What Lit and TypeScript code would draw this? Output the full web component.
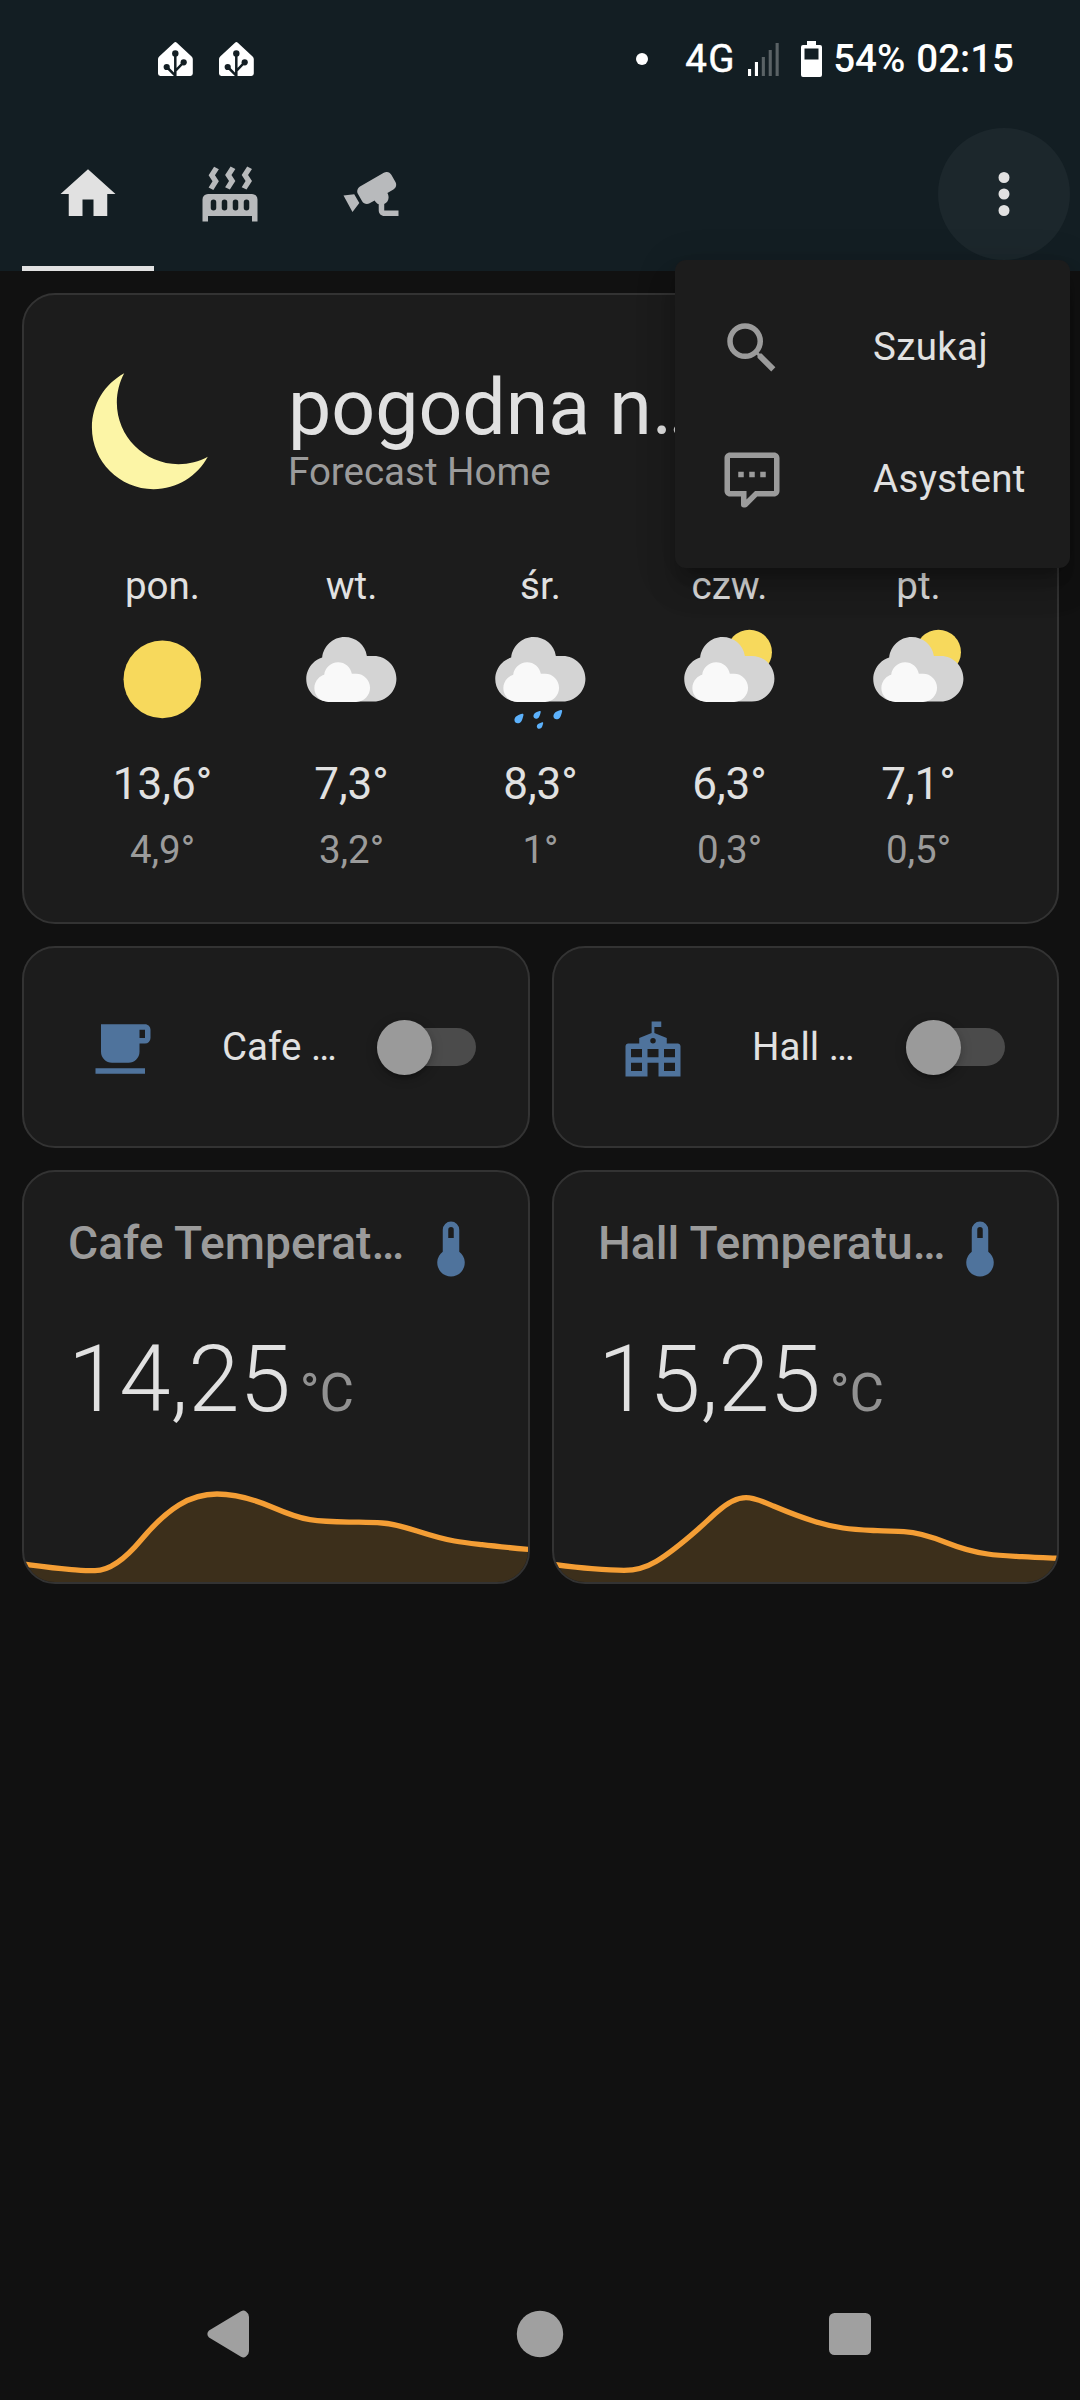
import { LitElement, html, css, svg } from "lit";
import { customElement, property } from "lit/decorators.js";

const ICONS: Record<string, string> = {
  home: "M10,20V14H14V20H19V12H22L12,3L2,12H5V20H10Z",
  radiator:
    "M7.95,3L6.53,5.19L7.95,7.4H7.94L5.95,10.5L4.22,9.6L5.64,7.39L4.22,5.19L6.22,2.09L7.95,3M13.95,2.89L12.53,5.1L13.95,7.3L13.94,7.31L11.95,10.4L10.22,9.5L11.64,7.3L10.22,5.1L12.22,2L13.95,2.89M20,2.89L18.56,5.1L20,7.3V7.31L18,10.4L16.25,9.5L17.67,7.3L16.25,5.1L18.25,2L20,2.89M2,22V14A2,2 0 0,1 4,12H20A2,2 0 0,1 22,14V22H20V20H4V22H2M6,14A1,1 0 0,0 5,15V17A1,1 0 0,0 6,18A1,1 0 0,0 7,17V15A1,1 0 0,0 6,14M10,14A1,1 0 0,0 9,15V17A1,1 0 0,0 10,18A1,1 0 0,0 11,17V15A1,1 0 0,0 10,14M14,14A1,1 0 0,0 13,15V17A1,1 0 0,0 14,18A1,1 0 0,0 15,17V15A1,1 0 0,0 14,14M18,14A1,1 0 0,0 17,15V17A1,1 0 0,0 18,18A1,1 0 0,0 19,17V15A1,1 0 0,0 18,14Z",
  cctv: "M17.8,4.04C17.42,4.01 17.02,4.1 16.65,4.3L8,9.3C7.04,9.86 6.72,11.1 7.27,12.04L8.77,14.63C9.32,15.6 10.54,15.92 11.5,15.37L13.3,14.33C13.7,14.9 14.2,15.5 14.81,15.7V18C14.81,19.1 15.7,20 16.81,20H22V18H16.81V15.6C17.9,15.1 18.4,14.3 18.4,13.2C18.4,12.6 18.2,12.1 17.97,11.6L20.15,10.37C21.1,9.8 21.45,8.6 20.89,7.63L19.39,5.04C19.05,4.44 18.44,4.1 17.8,4.04M5.9,12.1L2,12.5L5.27,18.5L7.75,15.3Z",
  dots: "M12,16A2,2 0 0,1 14,18A2,2 0 0,1 12,20A2,2 0 0,1 10,18A2,2 0 0,1 12,16M12,10A2,2 0 0,1 14,12A2,2 0 0,1 12,14A2,2 0 0,1 10,12A2,2 0 0,1 12,10M12,4A2,2 0 0,1 14,6A2,2 0 0,1 12,8A2,2 0 0,1 10,6A2,2 0 0,1 12,4Z",
  magnify:
    "M9.5,3A6.5,6.5 0 0,1 16,9.5C16,11.11 15.41,12.59 14.44,13.73L14.71,14H15.5L20.5,19L19,20.5L14,15.5V14.71L13.73,14.44C12.59,15.41 11.11,16 9.5,16A6.5,6.5 0 0,1 3,9.5A6.5,6.5 0 0,1 9.5,3M9.5,5C7,5 5,7 5,9.5C5,12 7,14 9.5,14C12,14 14,12 14,9.5C14,7 12,5 9.5,5Z",
  message:
    "M20 2H4C2.9 2 2 2.9 2 4V16C2 17.1 2.9 18 4 18H8V21C8 21.6 8.4 22 9 22H9.5C9.7 22 10 21.9 10.2 21.7L13.9 18H20C21.1 18 22 17.1 22 16V4C22 2.9 21.1 2 20 2M20 16H13.1L10 19.1V16H4V4H20V16M17 11H15V9H17V11M13 11H11V9H13V11M9 11H7V9H9V11Z",
  coffee:
    "M2,21H20V19H2M20,8H18V5H20M20,3H4V13A4,4 0 0,0 8,17H14A4,4 0 0,0 18,13V10H20A2,2 0 0,0 22,8V5C22,3.89 21.1,3 20,3Z",
  townHall:
    "M21,10H17V8L12.5,6.2V4H15V2H11.5V6.2L7,8V10H3C2.45,10 2,10.45 2,11V22H10V17H14V22H22V11C22,10.45 21.55,10 21,10M8,20H4V17H8V20M8,15H4V12H8V15M12,8A1,1 0 0,1 13,9A1,1 0 0,1 12,10A1,1 0 0,1 11,9A1,1 0 0,1 12,8M14,15H10V12H14V15M20,20H16V17H20V20M20,15H16V12H20V15Z",
  thermometer:
    "M15 13V5A3 3 0 0 0 9 5V13A5 5 0 1 0 15 13M12 4A1 1 0 0 1 13 5V8H11V5A1 1 0 0 1 12 4Z",
};

const icon = (name: string) => html`
  <svg class="icon" width="66" height="66" viewBox="0 0 24 24"><path fill="currentColor" d=${ICONS[name]}></path></svg>
`;

type Sky = "sunny" | "cloudy" | "rainy" | "partly";

const DROP =
  "m5.2852 14.734c-0.22401 0.24765-0.57115 0.2988-0.77505 0.11395-0.20391-0.1845-0.18732-0.53481 0.036689-0.78281 0.14817-0.16298 0.59126-0.32914 0.87559-0.42369 0.12453-0.04092 0.22684 0.05186 0.19791 0.17956-0.065617 0.2921-0.18732 0.74965-0.33514 0.91299";

// x, y, scale of each rain drop in the 17-unit weather box
const DROPS = [
  [5.1, 14.4, 1.12],
  [7.9, 13.85, 0.9],
  [8.35, 15.5, 0.78],
  [11.1, 13.8, 1.08],
];

const weatherIcon = (sky: Sky) => html`
  <svg class="sky" width="110" height="110" viewBox="0 0 17 17">
    ${sky === "sunny" ? svg`<circle cx="8.4" cy="8.4" r="6" fill="#f7d95c"></circle>` : ""}
    ${sky === "partly" ? svg`<circle cx="11.497" cy="4.211" r="3.484" fill="#f7d95c"></circle>` : ""}
    ${sky !== "sunny"
      ? svg`
        <path fill="#d4d4d4" d="m3.8863 5.035c-0.54892 0.16898-1.04 0.46637-1.4372 0.8636-0.63077 0.63041-1.0206 1.4933-1.0206 2.455 0 1.9251 1.5589 3.4682 3.4837 3.4682h6.9688c1.9251 0 3.484-1.5981 3.484-3.5232 0-1.9251-1.5589-3.5232-3.484-3.5232h-1.0834c-0.25294-1.6916-1.6986-2.9083-3.4463-2.9083-1.7995 0-3.2805 1.4153-3.465 3.1679"></path>
        <path fill="#f9f9f9" d="m4.1996 7.6995c-0.33902 0.10407-0.64276 0.28787-0.88794 0.5334-0.39017 0.38982-0.63147 0.92322-0.63147 1.5176 0 1.1896 0.96414 2.1431 2.1537 2.1431h4.3071c1.1896 0 2.153-0.98742 2.153-2.1777 0-1.1896-0.96344-2.1777-2.153-2.1777h-0.66992c-0.15593-1.0449-1.0499-1.7974-2.1297-1.7974-1.112 0-2.0274 0.87524-2.1417 1.9586"></path>`
      : ""}
    ${sky === "rainy"
      ? DROPS.map(
          ([x, y, s]) =>
            svg`<path fill="#5cb1fb" transform="translate(${x} ${y}) scale(${s}) translate(-5 -14.25)" d=${DROP}></path>`
        )
      : ""}
  </svg>
`;

const baseStyles = css`
  * {
    box-sizing: border-box;
  }
  svg {
    display: block;
    flex: none;
  }
  .card {
    background: #1c1c1c;
    border: 2px solid #333333;
    border-radius: 33px;
    overflow: hidden;
  }
`;

@customElement("status-bar")
class StatusBar extends LitElement {
  static styles = [
    baseStyles,
    css`
      :host {
        display: flex;
        align-items: center;
        justify-content: space-between;
        height: 117px;
        padding: 0 66px 0 158px;
        color: #fff;
        font-size: 38.5px;
        font-weight: 500;
        line-height: 46px;
      }
      .group {
        display: flex;
        align-items: center;
      }
      .notes {
        gap: 26px;
      }
      .dot {
        width: 12px;
        height: 12px;
        border-radius: 50%;
        background: #fff;
        margin-right: 37px;
      }
      .net {
        font-weight: 400;
        letter-spacing: 1.6px;
        -webkit-text-stroke: 0.5px #fff;
        margin-right: 12px;
      }
      .signal {
        margin-right: 22px;
      }
      .battery {
        margin-right: 11px;
      }
      .percent {
        margin-right: 11px;
      }
    `,
  ];

  private note() {
    return html`<svg width="35" height="34" viewBox="0 0 35 34">
      <path fill="#fff" d="M16 .7Q17.4 -.6 18.8 .7L33.6 14.4Q34.8 15.6 34.8 17V31.6Q34.8 34 32.4 34H2.4Q0 34 0 31.6V17Q0 15.6 1.2 14.4Z"></path>
      <g fill="none" stroke="#131e23" stroke-width="2.5">
        <path d="M17.3 11V34M25.5 20.4L17.3 29M8.7 25L17.3 33.6"></path>
      </g>
      <g fill="#131e23">
        <circle cx="17.3" cy="11.4" r="3.2"></circle>
        <circle cx="25.7" cy="20.3" r="3.1"></circle>
        <circle cx="8.7" cy="25" r="3.1"></circle>
      </g>
    </svg>`;
  }

  render() {
    const bars = [7, 14, 19, 26, 33];
    return html`
      <div class="group notes">${this.note()}${this.note()}</div>
      <div class="group">
        <div class="dot"></div>
        <div class="net">4G</div>
        <svg class="signal" width="31" height="34" viewBox="0 0 31 34">
          ${bars.map(
            (h, i) =>
              svg`<rect x=${i * 6.9} y=${34 - h} width="3.1" height=${h} fill=${i < 2 ? "#fff" : "#5a6265"}></rect>`
          )}
        </svg>
        <svg class="battery" width="21" height="36" viewBox="0 0 21 36">
          <path
            fill="#fff"
            fill-rule="evenodd"
            d="M6 0H15V4H19Q21 4 21 6V34Q21 36 19 36H2Q0 36 0 34V6Q0 4 2 4H6ZM3.5 7.5V18.5H17.5V7.5Z"
          ></path>
        </svg>
        <div class="percent">54%</div>
        <div>02:15</div>
      </div>
    `;
  }
}

@customElement("view-tabs")
class ViewTabs extends LitElement {
  static styles = [
    baseStyles,
    css`
      :host {
        display: flex;
        justify-content: space-between;
        align-items: center;
        height: 154px;
        padding: 0 10px 0 22px;
      }
      .tabs {
        display: flex;
        gap: 9.6px;
        height: 154px;
      }
      .tab {
        width: 132px;
        display: flex;
        align-items: center;
        justify-content: center;
        color: #b8babc;
        border-bottom: 5px solid transparent;
        padding-top: 5px;
      }
      .active {
        color: #e1e1e1;
        border-bottom-color: #e1e1e1;
      }
      .more {
        width: 132px;
        height: 132px;
        border-radius: 50%;
        background: #1c272c;
        color: #e1e1e1;
        display: flex;
        align-items: center;
        justify-content: center;
      }
    `,
  ];
  render() {
    return html`
      <div class="tabs">
        <div class="tab active">${icon("home")}</div>
        <div class="tab">${icon("radiator")}</div>
        <div class="tab">${icon("cctv")}</div>
      </div>
      <div class="more">${icon("dots")}</div>
    `;
  }
}

@customElement("overflow-menu")
class OverflowMenu extends LitElement {
  static styles = [
    baseStyles,
    css`
      :host {
        display: flex;
        flex-direction: column;
        width: 395px;
        height: 308px;
        padding: 22px 0;
        border-radius: 11px;
        background: #1c1c1c;
        box-shadow: 0 14px 14px -8px rgba(0, 0, 0, 0.2), 0 22px 28px 3px rgba(0, 0, 0, 0.14),
          0 8px 38px 5px rgba(0, 0, 0, 0.12);
      }
      .item {
        height: 132px;
        display: flex;
        align-items: center;
        gap: 88px;
        padding-left: 44px;
        font-size: 38.5px;
        line-height: 44px;
        letter-spacing: 0.35px;
        color: #e1e1e1;
        white-space: nowrap;
      }
      .icon {
        color: #9b9b9b;
      }
      .label {
        padding-bottom: 2px;
      }
    `,
  ];
  render() {
    return html`
      <div class="item">${icon("magnify")}<span class="label">Szukaj</span></div>
      <div class="item">${icon("message")}<span class="label">Asystent</span></div>
    `;
  }
}

interface Day {
  name: string;
  sky: Sky;
  high: string;
  low: string;
}

const DAYS: Day[] = [
  { name: "pon.", sky: "sunny", high: "13,6°", low: "4,9°" },
  { name: "wt.", sky: "cloudy", high: "7,3°", low: "3,2°" },
  { name: "śr.", sky: "rainy", high: "8,3°", low: "1°" },
  { name: "czw.", sky: "partly", high: "6,3°", low: "0,3°" },
  { name: "pt.", sky: "partly", high: "7,1°", low: "0,5°" },
];

@customElement("weather-card")
class WeatherCard extends LitElement {
  static styles = [
    baseStyles,
    css`
      :host {
        display: block;
      }
      .card {
        height: 631px;
        padding: 44px;
      }
      .now {
        display: flex;
        align-items: center;
        gap: 44px;
        height: 176px;
      }
      .text {
        padding-bottom: 2px;
      }
      .state {
        font-size: 77px;
        line-height: 92px;
        color: #e1e1e1;
        white-space: nowrap;
      }
      .place {
        font-size: 38.5px;
        line-height: 36px;
        color: #9b9b9b;
      }
      .days {
        display: grid;
        grid-template-columns: repeat(5, 1fr);
        margin-top: 51px;
      }
      .day {
        display: flex;
        flex-direction: column;
        align-items: center;
        color: #e1e1e1;
        font-size: 38.5px;
        line-height: 40px;
      }
      .sky {
        margin: 19px 0 24px;
      }
      .high {
        font-size: 44px;
        line-height: 50px;
        margin-bottom: 21px;
      }
      .low {
        color: #9b9b9b;
      }
    `,
  ];
  render() {
    return html`
      <div class="card">
        <div class="now">
          <svg width="176" height="176" viewBox="0 0 17 17">
            <path
              fill="#fcf5a6"
              d="m 13.502891,11.382935 c -1.011285,1.859223 -2.976664,3.121381 -5.2405751,3.121381 -3.289929,0 -5.953329,-2.663833 -5.953329,-5.9537625 0,-2.263911 1.261724,-4.228856 3.120948,-5.240575 -0.452782,0.842738 -0.712753,1.806363 -0.712753,2.832381 0,3.289928 2.663833,5.9533275 5.9533291,5.9533275 1.026017,0 1.989641,-0.259969 2.83238,-0.712752"
            ></path>
          </svg>
          <div class="text">
            <div class="state">pogodna n…</div>
            <div class="place">Forecast Home</div>
          </div>
        </div>
        <div class="days">
          ${DAYS.map(
            (d) => html`<div class="day">
              <div>${d.name}</div>
              ${weatherIcon(d.sky)}
              <div class="high">${d.high}</div>
              <div class="low">${d.low}</div>
            </div>`
          )}
        </div>
      </div>
    `;
  }
}

@customElement("switch-card")
class SwitchCard extends LitElement {
  @property() icon = "";
  @property() label = "";
  static styles = [
    baseStyles,
    css`
      :host {
        display: block;
      }
      .card {
        height: 202px;
        display: flex;
        align-items: center;
        padding: 0 52px 0 66px;
      }
      .icon {
        color: #4f739c;
        margin: 3px 66px 0 0;
      }
      .label {
        flex: 1;
        font-size: 38.5px;
        line-height: 44px;
        color: #e1e1e1;
        white-space: nowrap;
      }
      .track {
        width: 99px;
        height: 38px;
        border-radius: 19px;
        background: #4b4b4b;
        display: flex;
        align-items: center;
      }
      .thumb {
        flex: none;
        width: 55px;
        height: 55px;
        border-radius: 50%;
        background: #9a9a9a;
        box-shadow: 0 8px 3px -5px rgba(0, 0, 0, 0.2), 0 3px 6px 0 rgba(0, 0, 0, 0.14),
          0 3px 14px 0 rgba(0, 0, 0, 0.12);
      }
    `,
  ];
  render() {
    return html`
      <div class="card">
        ${icon(this.icon)}
        <div class="label">${this.label}</div>
        <div class="track"><div class="thumb"></div></div>
      </div>
    `;
  }
}

// x, y and slope of the curve at each knot
type Knot = [number, number, number];

// Hermite curve through the knots, written as cubic segments
function smooth(knots: Knot[]): string {
  let d = `M${knots[0][0]},${knots[0][1]}`;
  for (let i = 1; i < knots.length; i++) {
    const [x0, y0, m0] = knots[i - 1];
    const [x1, y1, m1] = knots[i];
    const t = (x1 - x0) / 3;
    d += `C${x0 + t},${y0 + m0 * t} ${x1 - t},${y1 - m1 * t} ${x1},${y1}`;
  }
  return d;
}

const CAFE: Knot[] = [
  [-4, 81.6, 0.13],
  [45, 87.3, 0.07],
  [71, 88.7, -0.02],
  [117, 58, -1.2],
  [155, 23, -0.62],
  [193, 12, 0],
  [249, 25.5, 0.43],
  [286, 37.7, 0.16],
  [335, 40.2, 0.02],
  [358, 41, 0.06],
  [393, 49, 0.32],
  [430.5, 59, 0.17],
  [458, 62.7, 0.12],
  [510, 67.9, 0.09],
];

const HALL: Knot[] = [
  [-4, 82, 0.13],
  [37.7, 86.7, 0.08],
  [70, 88.4, 0],
  [102, 79.5, -0.6],
  [144, 47.2, -0.88],
  [163, 30, -0.88],
  [192, 15.7, 0],
  [220, 24.3, 0.42],
  [261.5, 39.7, 0.3],
  [289, 46, 0.15],
  [323.5, 48.7, 0.05],
  [350, 49.6, 0.05],
  [392, 60.5, 0.4],
  [433.7, 72, 0.14],
  [468, 74.7, 0.06],
  [510, 76.5, 0.04],
];

@customElement("graph-card")
class GraphCard extends LitElement {
  @property() label = "";
  @property() value = "";
  @property({ attribute: false }) points: Knot[] = [];
  static styles = [
    baseStyles,
    css`
      :host {
        display: block;
      }
      .card {
        height: 414px;
        display: flex;
        flex-direction: column;
        padding-top: 44px;
      }
      .head {
        display: flex;
        justify-content: space-between;
        padding: 0 44px;
        height: 66px;
      }
      .title {
        width: 350px;
        font-size: 46.2px;
        font-weight: 500;
        line-height: 54px;
        color: #9b9b9b;
        white-space: nowrap;
      }
      .icon {
        color: #4f739c;
      }
      .reading {
        display: flex;
        align-items: baseline;
        gap: 9px;
        padding-left: 44px;
        margin-top: 43px;
        line-height: 110px;
        font-weight: 300;
      }
      .value {
        font-size: 92.4px;
        color: #e1e1e1;
      }
      .unit {
        font-size: 53px;
        font-weight: 400;
        color: #919191;
      }
      .graph {
        margin-top: auto;
      }
    `,
  ];
  render() {
    const line = smooth(this.points);
    return html`
      <div class="card">
        <div class="head">
          <div class="title">${this.label}</div>
          ${icon("thermometer")}
        </div>
        <div class="reading"><span class="value">${this.value}</span><span class="unit">°C</span></div>
        <svg class="graph" width="504" height="100" viewBox="0 0 504 100">
          <path fill="#3c2f1b" d="${line}V100H-4Z"></path>
          <path fill="none" stroke="#f49e35" stroke-width="5.3" d=${line}></path>
        </svg>
      </div>
    `;
  }
}

@customElement("app-root")
class AppRoot extends LitElement {
  static styles = [
    baseStyles,
    css`
      :host {
        display: block;
        font-family: Roboto, sans-serif;
      }
      .screen {
        position: relative;
        display: flex;
        flex-direction: column;
        width: 1080px;
        height: 2400px;
        background: #111111;
        overflow: hidden;
      }
      .header {
        background: #131e23;
      }
      .menu {
        position: absolute;
        top: 260px;
        right: 10px;
      }
      .content {
        flex: 1;
        display: flex;
        flex-direction: column;
        gap: 22px;
        padding: 22px 21px 0 22px;
      }
      .pair {
        display: grid;
        grid-template-columns: 508px 507px;
        gap: 22px;
      }
      .nav {
        display: flex;
        align-items: center;
        justify-content: space-between;
        height: 132px;
        padding: 0 209px 0 207px;
      }
      .home {
        margin-left: 2px;
      }
    `,
  ];
  render() {
    return html`
      <div class="screen">
        <div class="header">
          <status-bar></status-bar>
          <view-tabs></view-tabs>
        </div>
        <div class="content">
          <weather-card></weather-card>
          <div class="pair">
            <switch-card .icon=${"coffee"} .label=${"Cafe …"}></switch-card>
            <switch-card .icon=${"townHall"} .label=${"Hall …"}></switch-card>
          </div>
          <div class="pair">
            <graph-card .label=${"Cafe Temperat…"} .value=${"14,25"} .points=${CAFE}></graph-card>
            <graph-card .label=${"Hall Temperatu…"} .value=${"15,25"} .points=${HALL}></graph-card>
          </div>
        </div>
        <div class="nav">
          <svg width="42" height="48" viewBox="0 0 42 48">
            <path
              fill="#a0a0a0"
              d="M2 20.5L34 1.3Q36.5 -.3 39 1.4Q42 3.5 42 7V41Q42 44.5 39 46.6Q36.5 48.3 34 46.7L2 27.5Q-1.3 24 2 20.5Z"
            ></path>
          </svg>
          <svg class="home" width="48" height="48" viewBox="0 0 48 48">
            <circle cx="24" cy="24" r="23.2" fill="#a0a0a0"></circle>
          </svg>
          <svg width="42" height="42" viewBox="0 0 42 42"><rect width="42" height="42" rx="5.5" fill="#a0a0a0"></rect></svg>
        </div>
        <overflow-menu class="menu"></overflow-menu>
      </div>
    `;
  }
}
